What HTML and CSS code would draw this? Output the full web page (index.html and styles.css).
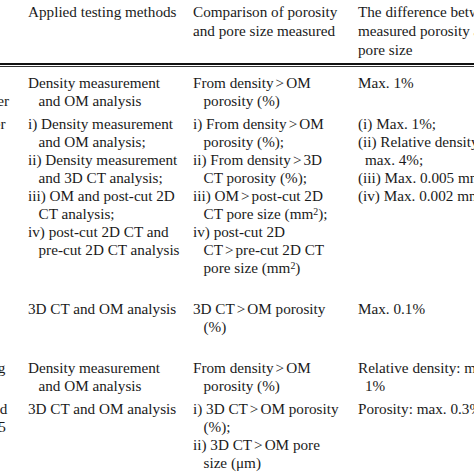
FILE: index.html
```html
<!DOCTYPE html>
<html lang="en">
<head>
<meta charset="utf-8">
<title>Porosity testing methods</title>
<link rel="stylesheet" href="styles.css">
</head>
<body>
<table class="tbl">
  <thead>
    <tr>
      <th class="c1">Material</th>
      <th class="c2">Applied testing methods</th>
      <th class="c3">Comparison of porosity and pore size measured</th>
      <th class="c4">The difference between measured porosity and pore size</th>
    </tr>
  </thead>
  <tbody>
    <tr class="first">
      <td class="c1">316L SLM<br>Stainless steel powder</td>
      <td class="c2"><div class="item">Density measurement and OM analysis</div></td>
      <td class="c3"><div class="item">From density<span class="gt">&gt;</span>OM porosity (%)</div></td>
      <td class="c4"><div class="item4">Max. 1%</div></td>
    </tr>
    <tr>
      <td class="c1">Titanium alloys, laser<br>powder bed<br>fusion (LPBF)<br>samples with<br>artificial<br>internal<br>defects of<br>various<br>sizes and<br>shapes</td>
      <td class="c2">
        <div class="item">i) Density measurement and OM analysis;</div>
        <div class="item">ii) Density measurement and 3D CT analysis;</div>
        <div class="item">iii) OM and post-cut 2D CT analysis;</div>
        <div class="item">iv) post-cut 2D CT and pre-cut 2D CT analysis</div>
      </td>
      <td class="c3">
        <div class="item">i) From density<span class="gt">&gt;</span>OM porosity (%);</div>
        <div class="item">ii) From density<span class="gt">&gt;</span>3D CT porosity (%);</div>
        <div class="item">iii) OM<span class="gt">&gt;</span>post-cut 2D CT pore size (mm<sup>2</sup>);</div>
        <div class="item">iv) post-cut 2D CT<span class="gt">&gt;</span>pre-cut 2D CT pore size (mm<sup>2</sup>)</div>
      </td>
      <td class="c4">
        <div class="item4">(i) Max. 1%;</div>
        <div class="item4">(ii) Relative density: max. 4%;</div>
        <div class="item4">(iii) Max. 0.005 mm<sup>2</sup>;</div>
        <div class="item4">(iv) Max. 0.002 mm<sup>2</sup></div>
      </td>
    </tr>
    <tr>
      <td class="c1">Aluminium<br>alloy, LPBF<br>samples</td>
      <td class="c2"><div class="item">3D CT and OM analysis</div></td>
      <td class="c3"><div class="item">3D CT<span class="gt">&gt;</span>OM porosity (%)</div></td>
      <td class="c4"><div class="item4">Max. 0.1%</div></td>
    </tr>
    <tr>
      <td class="c1">SLM-built AlSi10Mg<br>parts</td>
      <td class="c2"><div class="item">Density measurement and OM analysis</div></td>
      <td class="c3"><div class="item">From density<span class="gt">&gt;</span>OM porosity (%)</div></td>
      <td class="c4"><div class="item4">Relative density: max. 1%</div></td>
    </tr>
    <tr>
      <td class="c1">Selective laser melted<br>(Ti–6Al–4V) Grade 5</td>
      <td class="c2"><div class="item">3D CT and OM analysis</div></td>
      <td class="c3">
        <div class="item">i) 3D CT<span class="gt">&gt;</span>OM porosity (%);</div>
        <div class="item">ii) 3D CT<span class="gt">&gt;</span>OM pore size (μm)</div>
      </td>
      <td class="c4"><div class="item4">Porosity: max. 0.3%</div></td>
    </tr>
  </tbody>
</table>
</body>
</html>
```
FILE: styles.css
```css
html, body {
  margin: 0;
  padding: 0;
  overflow: hidden;
  background: #ffffff;
}

body {
  font-family: "Liberation Serif", "Times New Roman", serif;
  font-size: 15.2px;
  color: #1a1a1a;
}

.tbl {
  table-layout: fixed;
  border-collapse: separate;
  border-spacing: 0;
  width: 644px;
  margin-left: -126px;
}

.tbl th,
.tbl td {
  box-sizing: border-box;
  text-align: left;
  vertical-align: top;
  font-weight: normal;
  padding: 0;
}

.tbl th {
  line-height: 19px;
  padding-top: 2px;
  padding-bottom: 4px;
  border-bottom: 2px solid #111;
}

.tbl td {
  line-height: 18px;
  padding-top: 5px;
}

.tbl tr.first td {
  padding-top: 9px;
  box-shadow: inset 0 1px 0 #ffffff, inset 0 2px 0 #333;
}

.c1 {
  width: 154px;
  padding-right: 4px;
  white-space: nowrap;
}

.tbl .c2 {
  width: 165px;
  padding-right: 11px;
}

.tbl .c3 {
  width: 165px;
  padding-right: 16px;
}

.tbl .c4 {
  width: 160px;
  padding-right: 10px;
}

.item {
  padding-left: 10.5px;
  text-indent: -10.5px;
}

.item4 {
  padding-left: 7px;
  text-indent: -7px;
}

.gt {
  margin: 0 2px;
}

sup {
  font-size: 0.65em;
  line-height: 0;
  vertical-align: 0.45em;
}
```
